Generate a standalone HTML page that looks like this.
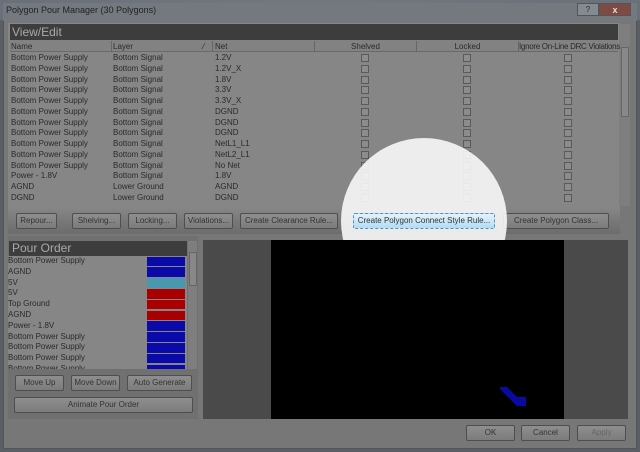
<!DOCTYPE html>
<html><head><meta charset="utf-8"><style>
*{margin:0;padding:0;box-sizing:border-box}
body{width:640px;height:452px;overflow:hidden;background:#5a5f66;font-family:"Liberation Sans",sans-serif;font-size:8px;color:#2a2a2a;position:relative}
.a{position:absolute;white-space:nowrap}
.row{position:absolute;left:10px;width:608px;height:10.8px;line-height:10.8px;white-space:nowrap}
.row span{position:absolute}
.cb{position:absolute;width:8px;height:8px;border:1px solid #5a5a5a;top:1px;background:#8c8c8c}
.btn{position:absolute;height:16px;border:1px solid #4e4e4e;border-radius:2px;background:linear-gradient(#8e8e8e,#7c7c7c);text-align:center;line-height:14px;font-size:8px;color:#333;white-space:nowrap}
.po{position:absolute;left:8px;width:138px;height:10.8px;line-height:10.8px;white-space:nowrap}
.sw{position:absolute;left:147px;width:38px;height:9.6px}
</style></head><body>
<div class="a" style="left:0;top:0;width:640px;height:20px;background:linear-gradient(90deg,#6a7079,#727880 50%,#6a7079)"></div>
<div class="a" style="left:3px;top:3px;width:634px;height:446px;background:#777;border:1px solid #555"></div>
<div class="a" style="left:3px;top:3px;width:634px;height:18px;background:#747980"></div>
<div class="a" style="left:6px;top:5px;font-size:9px;color:#222">Polygon Pour Manager (30 Polygons)</div>
<div class="a" style="left:577px;top:3px;width:22px;height:13px;border:1px solid #555;background:#858a90;text-align:center;font-size:8px;line-height:12px">?</div>
<div class="a" style="left:599px;top:3px;width:32px;height:13px;border:1px solid #555;background:#7e4a44;text-align:center;font-size:9px;line-height:12px;color:#ddd;font-weight:bold">x</div>

<div class="a" style="left:8px;top:23px;width:612px;height:186px;background:#868686"></div>
<div class="a" style="left:10px;top:24px;width:608px;height:16px;background:#3d3d3d;color:#aaa;font-size:12px;line-height:16px;padding-left:2px">View/Edit</div>
<div class="a" style="left:619px;top:24px;width:11px;height:182px;background:#7e7e7e"></div>
<div class="a" style="left:621px;top:47px;width:8px;height:70px;background:#888;border:1px solid #666"></div>
<div class="a" style="left:10px;top:40px;width:608px;height:12px;background:#828282;border-bottom:1px solid #6a6a6a"></div>
<div class="a" style="left:10px;top:41px;line-height:11px;width:608px;height:11px">
<span class="a" style="left:1px">Name</span><span class="a" style="left:101px;width:1px;height:11px;background:#666"></span>
<span class="a" style="left:103px">Layer</span><span class="a" style="left:193px">⁄</span><span class="a" style="left:202px;width:1px;height:11px;background:#666"></span>
<span class="a" style="left:205px">Net</span><span class="a" style="left:304px;width:1px;height:11px;background:#666"></span>
<span class="a" style="left:305px;width:101px;text-align:center">Shelved</span><span class="a" style="left:406px;width:1px;height:11px;background:#666"></span>
<span class="a" style="left:407px;width:101px;text-align:center">Locked</span><span class="a" style="left:508px;width:1px;height:11px;background:#666"></span>
<span class="a" style="left:509px;width:100px;text-align:center;letter-spacing:-0.3px">Ignore On-Line DRC Violations</span>
</div>
<div id="rows"></div>

<div class="a" style="left:8px;top:208px;width:612px;height:26px;background:linear-gradient(#868686,#6c6c6c)"></div>
<div class="btn" style="left:16px;top:213px;width:41px">Repour...</div>
<div class="btn" style="left:72px;top:213px;width:49px">Shelving...</div>
<div class="btn" style="left:128px;top:213px;width:49px">Locking...</div>
<div class="btn" style="left:184px;top:213px;width:49px">Violations...</div>
<div class="btn" style="left:240px;top:213px;width:98px">Create Clearance Rule...</div>
<div class="btn" style="left:503px;top:213px;width:106px">Create Polygon Class...</div>

<div class="a" style="left:341px;top:138px;width:166px;height:166px;border-radius:50%;background:rgba(252,252,252,0.88)"></div>
<div class="btn" style="left:353px;top:213px;width:142px;background:linear-gradient(#e4f3fb,#b2dcf4);border:1px dashed #5a8fb5;color:#333">Create Polygon Connect Style Rule...</div>

<div class="a" style="left:8px;top:236px;width:190px;height:183px;background:#707070"></div>
<div class="a" style="left:9px;top:241px;width:178px;height:15px;background:#3d3d3d;color:#aaa;font-size:12px;line-height:15px;padding-left:3px">Pour Order</div>
<div class="a" style="left:8px;top:256px;width:179px;height:113px;background:#868686;overflow:hidden" id="po"></div>
<div class="a" style="left:188px;top:241px;width:9px;height:128px;background:#7e7e7e"></div>
<div class="a" style="left:189px;top:252px;width:8px;height:34px;background:#888;border:1px solid #666"></div>
<div class="btn" style="left:15px;top:375px;width:49px">Move Up</div>
<div class="btn" style="left:71px;top:375px;width:49px">Move Down</div>
<div class="btn" style="left:127px;top:375px;width:65px">Auto Generate</div>
<div class="btn" style="left:14px;top:397px;width:179px">Animate Pour Order</div>

<div class="a" style="left:203px;top:240px;width:425px;height:179px;background:#4a4a4a"></div>
<div class="a" style="left:271px;top:240px;width:293px;height:179px;background:#000"></div>
<svg class="a" style="left:498px;top:385px" width="30" height="22"><polygon points="2,2 9,2 19,12 28,12 28,21 19,21 8,10 2,4" fill="#0a0aa0"/></svg>

<div class="btn" style="left:466px;top:425px;width:49px">OK</div>
<div class="btn" style="left:521px;top:425px;width:49px">Cancel</div>
<div class="btn" style="left:577px;top:425px;width:49px;color:#666">Apply</div>

<script>
var d=[["Bottom Power Supply","Bottom Signal","1.2V"],["Bottom Power Supply","Bottom Signal","1.2V_X"],["Bottom Power Supply","Bottom Signal","1.8V"],["Bottom Power Supply","Bottom Signal","3.3V"],["Bottom Power Supply","Bottom Signal","3.3V_X"],["Bottom Power Supply","Bottom Signal","DGND"],["Bottom Power Supply","Bottom Signal","DGND"],["Bottom Power Supply","Bottom Signal","DGND"],["Bottom Power Supply","Bottom Signal","NetL1_L1"],["Bottom Power Supply","Bottom Signal","NetL2_L1"],["Bottom Power Supply","Bottom Signal","No Net"],["Power - 1.8V","Bottom Signal","1.8V"],["AGND","Lower Ground","AGND"],["DGND","Lower Ground","DGND"],["Power - 1.8V","Lower Ground","1.8V"]];
var h="";d.forEach(function(r,i){var t=53+i*10.75;if(t>203)return;h+='<div class="row" style="top:'+t+'px;height:'+Math.min(10.8,207-t)+'px;overflow:hidden"><span style="left:1px">'+r[0]+'</span><span style="left:103px">'+r[1]+'</span><span style="left:205px">'+r[2]+'</span><div class="cb" style="left:351px"></div><div class="cb" style="left:453px"></div><div class="cb" style="left:554px"></div></div>'});
document.getElementById("rows").innerHTML=h;
var p=[["Bottom Power Supply","#0a0aa8"],["AGND","#0a0aa8"],["5V","#4a98b0"],["5V","#a80000"],["Top Ground","#a80000"],["AGND","#a80000"],["Power - 1.8V","#0a0aa8"],["Bottom Power Supply","#0a0aa8"],["Bottom Power Supply","#0a0aa8"],["Bottom Power Supply","#0a0aa8"],["Bottom Power Supply","#0a0aa8"]];
var q="";p.forEach(function(r,i){var t=i*10.8;q+='<div class="po" style="left:0;top:'+t+'px">'+r[0]+'</div><div class="sw" style="left:139px;top:'+(t+0.6)+'px;background:'+r[1]+'"></div>'});
document.getElementById("po").innerHTML=q;
</script>
</body></html>
